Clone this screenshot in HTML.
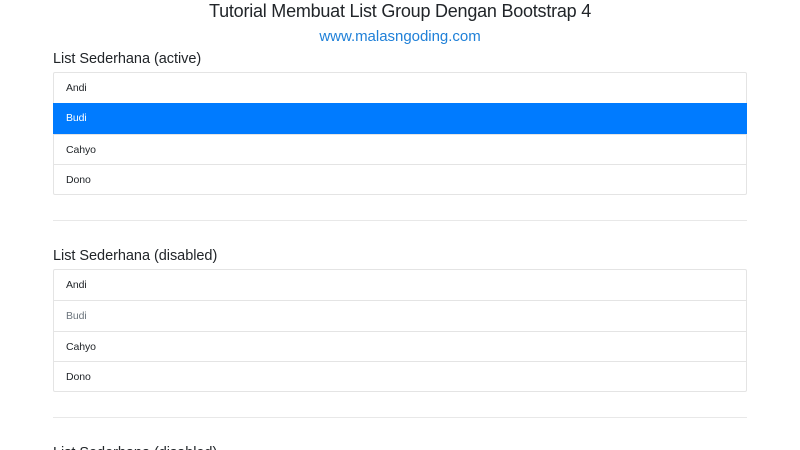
<!DOCTYPE html>
<html lang="id">
<head>
<meta charset="utf-8">
<title>Tutorial Membuat List Group Dengan Bootstrap 4</title>
<style>
html,body{margin:0;padding:0;background:#fff;width:800px;height:450px;overflow:hidden}
#w{position:relative;width:800px;height:450px;overflow:hidden;contain:paint;font-family:"Liberation Sans",sans-serif;color:#212529}
.t{position:absolute;white-space:nowrap}
.title{left:0;width:800px;text-align:center;top:0;font-size:18px;line-height:23px;letter-spacing:-.23px}
.sub{left:0;width:800px;text-align:center;top:28px;font-size:15px;line-height:18px;color:#1f80d8;letter-spacing:-.02px}
.h{left:53px;font-size:14.5px;line-height:18px;letter-spacing:-.04px}
.lg{position:absolute;left:53px;width:694px;height:123px;box-sizing:border-box;border:1px solid #e4e4e4;border-radius:2px;background:#fff}
.it{position:absolute;left:-1px;width:694px;height:31px;box-sizing:border-box;padding:0 0 0 13px;font-size:10.5px;line-height:31px;letter-spacing:-.1px}
.sep{border-top:1px solid #e4e4e4}
.act{background:#007bff;color:#fff;line-height:31px}
.dis{color:#6c757d}
hr{position:absolute;left:53px;width:694px;margin:0;border:0;border-top:1px solid #e8e8e8}
</style>
</head>
<body>
<div id="w">
<div class="t title">Tutorial Membuat List Group Dengan Bootstrap 4</div>
<div class="t sub">www.malasngoding.com</div>

<div class="t h" style="top:50px">List Sederhana (active)</div>
<div class="lg" style="top:72px">
  <div class="it" style="top:-1px;line-height:32px">Andi</div>
  <div class="it act" style="top:30px">Budi</div>
  <div class="it sep" style="top:61px">Cahyo</div>
  <div class="it sep" style="top:91px">Dono</div>
</div>
<hr style="top:220px">

<div class="t h" style="top:247px">List Sederhana (disabled)</div>
<div class="lg" style="top:269px">
  <div class="it" style="top:-1px;line-height:32px">Andi</div>
  <div class="it sep dis" style="top:30px">Budi</div>
  <div class="it sep" style="top:61px">Cahyo</div>
  <div class="it sep" style="top:91px">Dono</div>
</div>
<hr style="top:417px">

<div class="t h" style="top:444px">List Sederhana (disabled)</div>
</div>
</body>
</html>
